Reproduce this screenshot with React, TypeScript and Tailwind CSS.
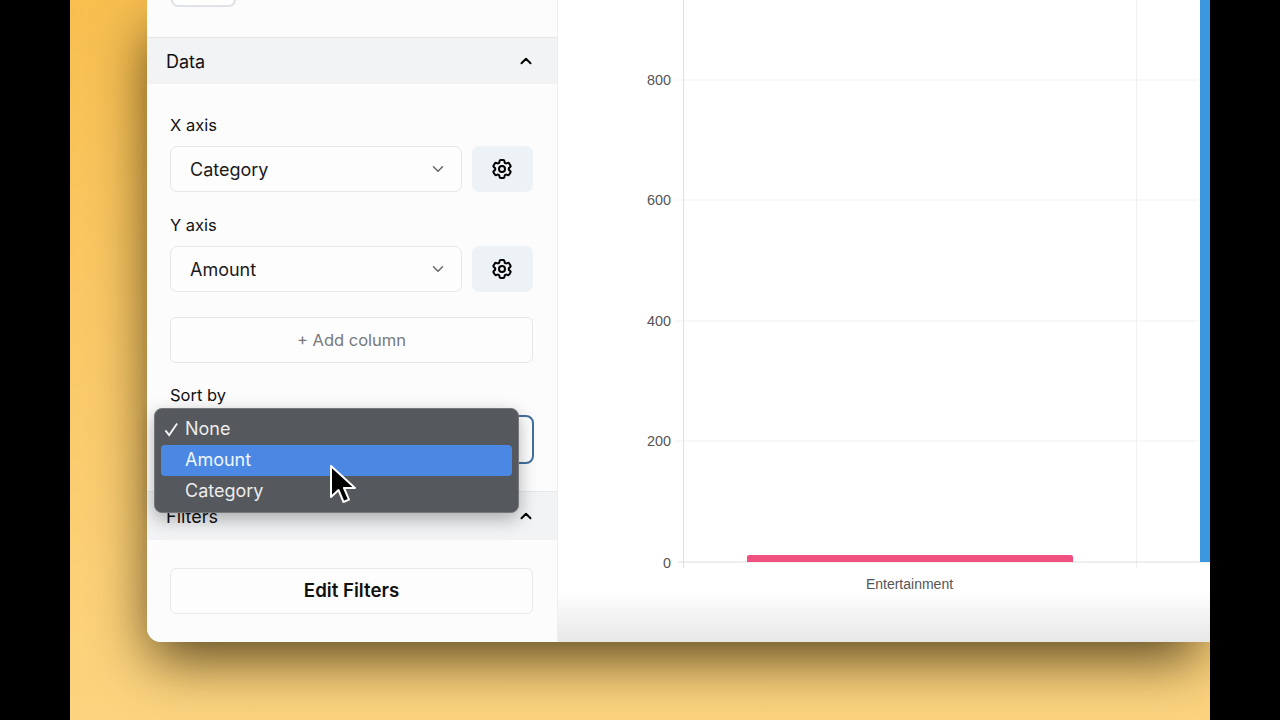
import { ChevronDown, ChevronUp } from "lucide-react";
import { HiOutlineCog6Tooth } from "react-icons/hi2";

function SectionHeader({ title, tall }: { title: string; tall?: boolean }) {
    return (
        <div className={`${tall ? "h-[49px]" : "h-[47px]"} shrink-0 bg-[#f1f3f4] border-t border-[#e4e7ea] flex items-center justify-between pl-[19px] pr-[22px] text-[18px] text-[#111]`}>
            <span>{title}</span>
            <ChevronUp className="w-[18px] h-[18px] text-black" strokeWidth={2.6} />
        </div>
    );
}

function AxisRow({ label, value }: { label: string; value: string }) {
    return (
        <div className="flex flex-col">
            <div className="h-[24px] flex items-center text-[16.5px] text-[#111]">{label}</div>
            <div className="mt-[9px] flex gap-[10px]">
                <div className="w-[292px] h-[46px] bg-[#fdfdfe] border border-[#e5e7eb] rounded-[7px] flex items-center justify-between pl-[19px] pr-[14px] text-[18px] text-[#1a1a1a]">
                    <span>{value}</span>
                    <ChevronDown className="w-[18px] h-[18px] text-[#666]" strokeWidth={2} />
                </div>
                <div className="w-[61px] h-[46px] bg-[#edf2f6] rounded-[7px] flex items-center justify-center">
                    <HiOutlineCog6Tooth className="w-[24px] h-[24px] text-black -ml-[1px]" style={{ strokeWidth: 2 }} />
                </div>
            </div>
        </div>
    );
}

function SortMenu() {
    return (
        <div className="absolute left-[7px] top-[408px] w-[365px] h-[105px] bg-[#55585c] border border-[#75777a] rounded-[8px] shadow-[0_6px_18px_rgba(0,0,0,0.3)] px-[6px] py-[5px] text-[18px] leading-[30px] text-[#ececec]">
            <div className="h-[31px] relative pl-[24px]">
                <svg width="15" height="15" viewBox="0 0 16 16" className="absolute left-[3px] top-[8px]">
                    <path d="M1.5 9l4 5L14 1.5" fill="none" stroke="#f2f2f2" strokeWidth="2" />
                </svg>
                None
            </div>
            <div className="h-[31px] pl-[24px] bg-[#4a88e4] rounded-[4px] text-[#f0f6ff]">Amount</div>
            <div className="h-[31px] pl-[24px]">Category</div>
        </div>
    );
}

function Chart() {
    const ticks = [
        { label: "800", y: 80 },
        { label: "600", y: 200 },
        { label: "400", y: 321 },
        { label: "200", y: 441 },
    ];
    return (
        <svg width="652" height="642" viewBox="0 0 652 642" className="block">
            {ticks.map((t) => (
                <g key={t.label}>
                    <line x1="118" x2="640" y1={t.y} y2={t.y} stroke="#f0f0f1" />
                    <text x="113" y={t.y + 5} textAnchor="end" fontSize="14.4" fill="#555" fontFamily="'Liberation Sans', sans-serif">
                        {t.label}
                    </text>
                </g>
            ))}
            <line x1="125.5" x2="125.5" y1="0" y2="568" stroke="#dfdfe1" />
            <line x1="578.5" x2="578.5" y1="0" y2="568" stroke="#f0f0f1" />
            <line x1="120" x2="652" y1="562" y2="562" stroke="#dedee0" />
            <path d="M189 562v-5a2 2 0 0 1 2-2h322a2 2 0 0 1 2 2v5z" fill="#ef5080" />
            <rect x="642" y="0" width="10" height="562" fill="#3a97e0" />
            <text x="113" y="568" textAnchor="end" fontSize="14.4" fill="#555" fontFamily="'Liberation Sans', sans-serif">0</text>
            <text x="351.5" y="589" textAnchor="middle" fontSize="14" fill="#555" fontFamily="'Liberation Sans', sans-serif">Entertainment</text>
        </svg>
    );
}

export default function App() {
    return (
        <div className="h-[720px] bg-black flex justify-center font-['Inter',sans-serif]">
            <div className="w-[1140px] h-[720px] overflow-hidden pl-[77px] bg-linear-to-b from-[#f8bf4f] to-[#fcd47f]">
                <div className="w-[1063px] h-[642px] flex bg-white rounded-bl-[14px] shadow-[-4px_24px_56px_-8px_rgba(30,20,0,0.75)]">
                    {/* Sidebar */}
                    <aside className="relative w-[411px] shrink-0 h-full bg-[#fcfcfd] border-r border-[#eceef0] rounded-bl-[14px] flex flex-col">
                        <div className="ml-[24px] w-[65px] h-[7px] bg-white border-2 border-t-0 border-[#dfe2e6] rounded-b-[8px]" />
                        <div className="h-[30px] shrink-0" />
                        <SectionHeader title="Data" />
                        <div className="px-[23px] flex flex-col">
                            <div className="h-[29px]" />
                            <AxisRow label="X axis" value="Category" />
                            <div className="h-[21px]" />
                            <AxisRow label="Y axis" value="Amount" />
                            <div className="mt-[25px] w-[363px] h-[46px] bg-[#fdfdfe] border border-[#e5e7eb] rounded-[6px] flex items-center justify-center text-[16.5px] text-[#77797d]">
                                + Add column
                            </div>
                            <div className="mt-[20px] h-[24px] flex items-center text-[16.5px] text-[#111]">Sort by</div>
                            <div className="mt-[8px] w-[364px] h-[49px] border-2 border-[#41719f] rounded-[8px] bg-white" />
                        </div>
                        <div className="h-[27px] shrink-0" />
                        <SectionHeader title="Filters" tall />
                        <div className="px-[23px] pt-[28px]">
                            <div className="w-[363px] h-[46px] bg-[#fdfdfe] border border-[#e8eaed] rounded-[6px] flex items-center justify-center text-[18.7px] font-semibold text-[#111]">
                                Edit Filters
                            </div>
                        </div>
                        <SortMenu />
                        <svg width="28" height="40" viewBox="0 0 28 40" className="absolute left-[182px] top-[465px]">
                            <path d="M2 1v31l7.5-7 5 12 5.5-2.4-5-11.6h11z" fill="#000" stroke="#fff" strokeWidth="2" strokeLinejoin="round" />
                        </svg>
                    </aside>
                    {/* Chart */}
                    <main className="flex-1 h-full bg-linear-to-b from-white from-[92%] to-[#e7e7e8]">
                        <Chart />
                    </main>
                </div>
            </div>
        </div>
    );
}
